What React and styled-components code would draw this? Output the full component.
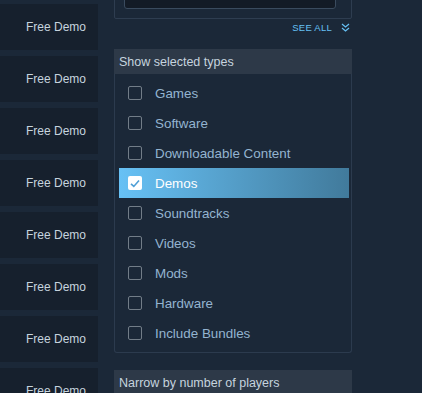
import React from "react";
import styled, { createGlobalStyle } from "styled-components";

const GlobalStyle = createGlobalStyle`
  body {
    margin: 0;
    background: #1b2838;
    font-family: "Liberation Sans", Arial, sans-serif;
    overflow: hidden;
  }
`;

const types = [
  "Games",
  "Software",
  "Downloadable Content",
  "Demos",
  "Soundtracks",
  "Videos",
  "Mods",
  "Hardware",
  "Include Bundles",
];

const App = () => {
  return (
    <>
      <GlobalStyle />
      <Page>
        <ResultList>
          {Array.from({ length: 8 }).map((_, i) => (
            <ResultRow key={i}>Free Demo</ResultRow>
          ))}
        </ResultList>
        <Sidebar>
          <SearchBox>
            <SearchInput />
          </SearchBox>
          <SeeAll>
            SEE ALL
            <svg width="9" height="9" viewBox="0 0 9 9" fill="none">
              <path d="M1 1 L4.5 4 L8 1" stroke="#66c0f4" strokeWidth="1.2" />
              <path d="M1 5 L4.5 8 L8 5" stroke="#66c0f4" strokeWidth="1.2" />
            </svg>
          </SeeAll>
          <BlockHeader>Show selected types</BlockHeader>
          <BlockBody>
            {types.map((t) => (
              <TypeRow key={t} checked={t === "Demos"}>
                <Checkbox checked={t === "Demos"}>
                  {t === "Demos" && (
                    <svg width="10" height="9" viewBox="0 0 10 9" fill="none">
                      <path d="M1 4.8 L3.8 7.4 L9 1.4" stroke="#4e9fd6" strokeWidth="1.6" />
                    </svg>
                  )}
                </Checkbox>
                {t}
              </TypeRow>
            ))}
          </BlockBody>
          <BlockHeader spaced>Narrow by number of players</BlockHeader>
        </Sidebar>
      </Page>
    </>
  );
};

const Page = styled.div`
  display: flex;
  gap: 16px;
  height: 393px;
  overflow: hidden;
`;

const ResultList = styled.div`
  width: 98px;
  display: flex;
  flex-direction: column;
  gap: 6px;
  padding-top: 4px;
`;

const ResultRow = styled.div`
  height: 46px;
  flex-shrink: 0;
  background: #16202d;
  color: #c6d4df;
  font-size: 12px;
  display: flex;
  align-items: center;
  justify-content: flex-end;
  padding-right: 12px;
  box-sizing: border-box;
`;

const Sidebar = styled.div`
  width: 238px;
  display: flex;
  flex-direction: column;
`;

const SearchBox = styled.div`
  margin-top: -30px;
  height: 49px;
  box-sizing: border-box;
  display: flex;
  flex-direction: column;
  justify-content: flex-end;
  border: 1px solid #2e3d50;
  border-radius: 0 0 2px 2px;
  padding: 0 15px 9px 9px;
  flex-shrink: 0;
`;

const SearchInput = styled.div`
  height: 28px;
  background: #131b26;
  border: 1px solid #3a4b5e;
  border-radius: 3px;
`;

const SeeAll = styled.div`
  height: 30px;
  box-sizing: border-box;
  padding: 3px 2px 0 0;
  display: flex;
  align-items: flex-start;
  justify-content: flex-end;
  gap: 9px;
  color: #66c0f4;
  font-size: 9.5px;
  line-height: 11px;
  letter-spacing: 0.25px;
  flex-shrink: 0;

  svg {
    margin-top: 1px;
  }
`;

const BlockHeader = styled.div`
  height: 25px;
  margin-top: ${(p) => (p.spaced ? "17px" : "0")};
  background: #2d3948;
  color: #c6d4df;
  font-size: 12.5px;
  display: flex;
  align-items: center;
  padding-left: 5px;
  flex-shrink: 0;
`;

const BlockBody = styled.div`
  border: 1px solid #2c3b4e;
  border-top: none;
  border-radius: 0 0 3px 3px;
  padding: 4px 2px 4px 4px;
  flex-shrink: 0;
`;

const TypeRow = styled.div`
  height: 30px;
  display: flex;
  align-items: center;
  padding-left: 9px;
  gap: 13px;
  font-size: 13.4px;
  color: ${(p) => (p.checked ? "#ffffff" : "#94b4d0")};
  background: ${(p) =>
    p.checked ? "linear-gradient(to right, #67c1f5, #417a9b)" : "transparent"};
`;

const Checkbox = styled.div`
  width: 14px;
  height: 14px;
  box-sizing: border-box;
  border-radius: 2px;
  border: ${(p) => (p.checked ? "none" : "1px solid #727d88")};
  background: ${(p) => (p.checked ? "#ffffff" : "transparent")};
  display: flex;
  align-items: center;
  justify-content: center;
`;

export default App;
